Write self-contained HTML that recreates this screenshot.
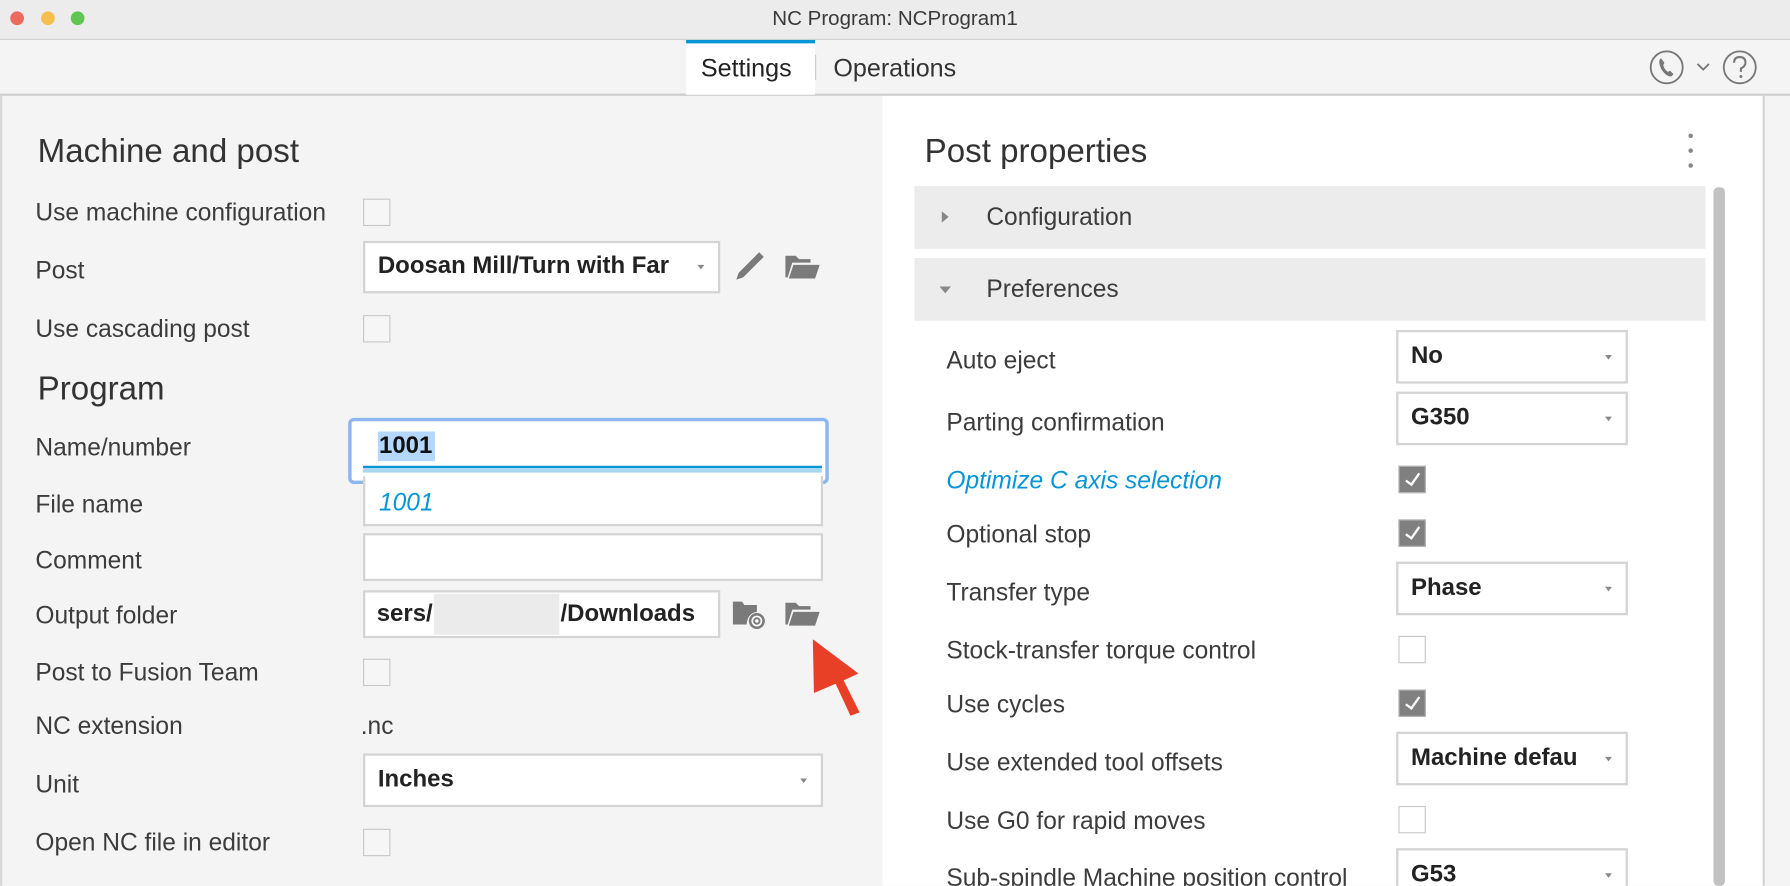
<!DOCTYPE html>
<html><head><meta charset="utf-8"><style>
html,body{margin:0;padding:0;width:1790px;height:886px;overflow:hidden;background:#f4f4f4}
#s{position:absolute;left:0;top:0;width:1568px;height:776px;transform:scale(1.14158);transform-origin:0 0;font-family:"Liberation Sans",sans-serif;color:#3c3c3c;background:#f4f4f4;overflow:hidden}
.a{position:absolute}
.t{position:absolute;font-size:21.5px;line-height:24px;white-space:nowrap}
.h{position:absolute;font-size:29px;line-height:30px;color:#333;white-space:nowrap}
.cb{position:absolute;width:22px;height:22px;border:1.5px solid #c8c8c8;background:#f6f6f6}
.cbw{background:#fff}
.ck{position:absolute;width:22px;height:22px;border:1.5px solid #b4b4b4;background:#808080}
.ck:after{content:"";position:absolute;left:8px;top:3px;width:5px;height:11px;border:solid #fff;border-width:0 2px 2px 0;transform:rotate(35deg)}
.dd{position:absolute;background:#fff;border:2px solid #d4d4d4;box-sizing:border-box}
.dd b{position:absolute;left:11px;top:50%;margin-top:-13px;font-size:21px;line-height:24px;color:#222;white-space:nowrap}
.dd i{position:absolute;right:12px;top:50%;margin-top:-2px;width:0;height:0;border-left:3px solid transparent;border-right:3px solid transparent;border-top:4px solid #888}
.in{position:absolute;background:#fff;border:2px solid #d4d4d4;box-sizing:border-box}
</style></head><body><div id="s">
<div class="a" style="left:0;top:0;width:1568px;height:34px;background:#ececec;border-bottom:1px solid #d0d0d0"></div>
<div class="a" style="left:9px;top:10px;width:12px;height:12px;border-radius:50%;background:#ec6a5e"></div>
<div class="a" style="left:36px;top:10px;width:12px;height:12px;border-radius:50%;background:#f4bf4f"></div>
<div class="a" style="left:62px;top:10px;width:12px;height:12px;border-radius:50%;background:#61c554"></div>
<div class="a" style="left:0;top:5px;width:1568px;text-align:center;font-size:18px;line-height:22px;color:#3a3a3a">NC Program: NCProgram1</div>
<div class="a" style="left:0;top:35px;width:1568px;height:47px;background:#f4f4f4;border-bottom:2px solid #cfcfcf"></div>
<div class="a" style="left:601px;top:35px;width:113px;height:48px;background:#fff"></div>
<div class="a" style="left:601px;top:35px;width:113px;height:3px;background:#0696d7"></div>
<div class="t" style="left:614px;top:48px;color:#222;font-size:22px">Settings</div>
<div class="a" style="left:714px;top:48px;width:1px;height:22px;background:#c8c8c8"></div>
<div class="t" style="left:730px;top:48px;color:#333;font-size:22px">Operations</div>
<svg class="a" style="left:1443px;top:43px" width="100" height="34" viewBox="0 0 100 34">
<circle cx="17" cy="16" r="14" fill="none" stroke="#777" stroke-width="1.6"/>
<path d="M12 8 q-3 2 0 9 q4 7 9 7 l2-2 -3-3 -2 1 q-3-2-4-6 l1-2 -3-4z" fill="#777"/>
<path d="M44 13 l5 5 5-5" fill="none" stroke="#777" stroke-width="1.6"/>
<circle cx="81" cy="16" r="14" fill="none" stroke="#777" stroke-width="1.6"/>
<path d="M76 12 q0-5 5-5 q5 0 5 5 q0 3-4 5 v3" fill="none" stroke="#777" stroke-width="1.8"/>
<circle cx="82" cy="24" r="1.3" fill="#777"/>
</svg>
<div class="a" style="left:0;top:84px;width:2px;height:692px;background:#d8d8d8"></div>
<div class="a" style="left:773px;top:84px;width:771px;height:692px;background:#fff;border-right:2px solid #d4d4d4"></div>
<div class="h" style="left:33px;top:118px">Machine and post</div>
<div class="t" style="left:31px;top:174px">Use machine configuration</div>
<div class="cb" style="left:318px;top:174px"></div>
<div class="t" style="left:31px;top:225px">Post</div>
<div class="dd" style="left:318px;top:211px;width:313px;height:46px"><b>Doosan Mill/Turn with Far</b><i></i></div>
<svg class="a" style="left:641px;top:218px" width="30" height="30" viewBox="0 0 30 30"><path d="M24 3 l4 4 -18 18 -6 2 2-6z" fill="#7a7a7a"/></svg>
<svg class="a" style="left:687px;top:222px" width="32" height="24" viewBox="0 0 32 24"><path d="M1 2 h9 l3 3 h10 v3 H7 L3 21 H1z" fill="#7a7a7a"/><path d="M8 10 H31 L27 22 H4z" fill="#7a7a7a"/></svg>
<div class="t" style="left:31px;top:276px">Use cascading post</div>
<div class="cb" style="left:318px;top:276px"></div>
<div class="h" style="left:33px;top:326px">Program</div>
<div class="t" style="left:31px;top:380px">Name/number</div>
<div class="a" style="left:305px;top:366px;width:415px;height:52px;border:3px solid #8cb6ef;border-radius:5px;background:#fff"></div>
<div class="a" style="left:318px;top:408px;width:402px;height:2px;background:#0696d7"></div>
<div class="a" style="left:318px;top:410px;width:402px;height:4px;background:#a8d8f0"></div>
<div class="a" style="left:331px;top:378px;width:50px;height:26px;background:#b3d7ff"></div>
<div class="t" style="left:332px;top:379px;font-weight:bold;color:#111;font-size:21px">1001</div>
<div class="t" style="left:31px;top:430px">File name</div>
<div class="in" style="left:318px;top:417px;width:403px;height:44px;border-top:none"></div>
<div class="t" style="left:332px;top:428px;font-style:italic;color:#0696d7">1001</div>
<div class="t" style="left:31px;top:479px">Comment</div>
<div class="in" style="left:318px;top:467px;width:403px;height:42px"></div>
<div class="t" style="left:31px;top:527px">Output folder</div>
<div class="in" style="left:318px;top:517px;width:313px;height:42px"></div>
<div class="a" style="left:380px;top:520px;width:110px;height:36px;background:#ebebeb"></div>
<div class="t" style="left:330px;top:526px;font-weight:bold;color:#222;font-size:21px">sers/</div>
<div class="t" style="left:491px;top:526px;font-weight:bold;color:#222;font-size:21px">/Downloads</div>
<svg class="a" style="left:641px;top:524px" width="32" height="28" viewBox="0 0 32 28"><path d="M1 3 h8 l2 3 h11 v6 q-8 1-9 11 H1z" fill="#7a7a7a"/><circle cx="22" cy="20" r="7" fill="#7a7a7a"/><circle cx="22" cy="20" r="4" fill="none" stroke="#fff" stroke-width="1.5"/><circle cx="22" cy="20" r="1.5" fill="#fff"/></svg>
<svg class="a" style="left:687px;top:526px" width="32" height="24" viewBox="0 0 32 24"><path d="M1 2 h9 l3 3 h10 v3 H7 L3 21 H1z" fill="#7a7a7a"/><path d="M8 10 H31 L27 22 H4z" fill="#7a7a7a"/></svg>
<svg class="a" style="left:700px;top:552px" width="70" height="80" viewBox="0 0 70 80"><path d="M12 8 L52 38 L39 44 L53 72 L45 75 L32 47 L13 55z" fill="#e84026"/></svg>
<div class="t" style="left:31px;top:577px">Post to Fusion Team</div>
<div class="cb" style="left:318px;top:577px"></div>
<div class="t" style="left:31px;top:624px">NC extension</div>
<div class="t" style="left:316px;top:624px">.nc</div>
<div class="t" style="left:31px;top:675px">Unit</div>
<div class="dd" style="left:318px;top:660px;width:403px;height:47px"><b>Inches</b><i></i></div>
<div class="t" style="left:31px;top:726px">Open NC file in editor</div>
<div class="cb" style="left:318px;top:726px"></div>
<div class="h" style="left:810px;top:118px">Post properties</div>
<div class="a" style="left:1479px;top:117px;width:4px;height:4px;border-radius:50%;background:#888;box-shadow:0 13px 0 #888,0 26px 0 #888"></div>
<div class="a" style="left:1501px;top:164px;width:10px;height:612px;border-radius:4px;background:#c2c2c2"></div>
<div class="a" style="left:801px;top:163px;width:693px;height:55px;background:#ececec"></div>
<div class="a" style="left:825px;top:185px;width:0;height:0;border-top:5px solid transparent;border-bottom:5px solid transparent;border-left:6px solid #888"></div>
<div class="t" style="left:864px;top:178px">Configuration</div>
<div class="a" style="left:801px;top:226px;width:693px;height:55px;background:#ececec"></div>
<div class="a" style="left:823px;top:251px;width:0;height:0;border-left:5px solid transparent;border-right:5px solid transparent;border-top:6px solid #888"></div>
<div class="t" style="left:864px;top:241px">Preferences</div>
<div class="t" style="left:829px;top:304px">Auto eject</div>
<div class="dd" style="left:1223px;top:289px;width:203px;height:47px"><b>No</b><i></i></div>
<div class="t" style="left:829px;top:358px">Parting confirmation</div>
<div class="dd" style="left:1223px;top:343px;width:203px;height:47px"><b>G350</b><i></i></div>
<div class="t" style="left:829px;top:409px;font-style:italic;color:#0696d7">Optimize C axis selection</div>
<div class="ck" style="left:1225px;top:408px"></div>
<div class="t" style="left:829px;top:456px">Optional stop</div>
<div class="ck" style="left:1225px;top:455px"></div>
<div class="t" style="left:829px;top:507px">Transfer type</div>
<div class="dd" style="left:1223px;top:492px;width:203px;height:47px"><b>Phase</b><i></i></div>
<div class="t" style="left:829px;top:558px">Stock-transfer torque control</div>
<div class="cb cbw" style="left:1225px;top:557px"></div>
<div class="t" style="left:829px;top:605px">Use cycles</div>
<div class="ck" style="left:1225px;top:604px"></div>
<div class="t" style="left:829px;top:656px">Use extended tool offsets</div>
<div class="dd" style="left:1223px;top:641px;width:203px;height:47px"><b>Machine defau</b><i></i></div>
<div class="t" style="left:829px;top:707px">Use G0 for rapid moves</div>
<div class="cb cbw" style="left:1225px;top:706px"></div>
<div class="t" style="left:829px;top:757px">Sub-spindle Machine position control</div>
<div class="dd" style="left:1223px;top:743px;width:203px;height:47px"><b>G53</b><i></i></div>
</div></body></html>
